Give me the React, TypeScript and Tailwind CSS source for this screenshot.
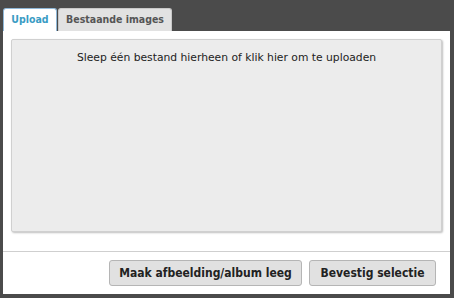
import { useState } from 'react';

const font = { fontFamily: '"DejaVu Sans", Verdana, sans-serif' };
const bold = { fontFamily: '"DejaVu Sans Condensed", "DejaVu Sans", Verdana, sans-serif' };

export default function App() {
  const [tab, setTab] = useState<'upload' | 'existing'>('upload');

  const tabClass = (active: boolean) =>
    active
      ? 'rounded-t-[3px] border border-b-0 border-[#8fb8d8] bg-white text-[10.5px] font-bold text-[#3a9cc4]'
      : 'rounded-t-[3px] border border-b-0 border-[#c8c8c8] bg-[#e2e2e2] text-[10.5px] font-bold text-[#555]';

  return (
    <div className="w-[454px] h-[298px] bg-[#4b4b4b] pl-[3px] pr-[4px] pb-[4px] pt-[8px] flex flex-col" style={font}>
      {/* Tabs */}
      <div className="flex gap-[1px] h-[23px]">
        <button onClick={() => setTab('upload')} className={`w-[54px] ${tabClass(tab === 'upload')}`} style={bold}>
          Upload
        </button>
        <button onClick={() => setTab('existing')} className={`w-[114px] ${tabClass(tab === 'existing')}`} style={bold}>
          Bestaande images
        </button>
      </div>

      {/* Panel */}
      <div className="flex-1 bg-white flex flex-col">
        <div className="px-[8px] pt-[8px] pb-[19px]">
          <div className="h-[193px] bg-[#ececec] border border-[#d0d0d0] rounded-[2px] shadow-[1px_1px_2px_rgba(0,0,0,0.25)] flex justify-center pt-[10px] cursor-pointer">
            <span className="text-[10.75px] text-[#222]">Sleep één bestand hierheen of klik hier om te uploaden</span>
          </div>
        </div>
        <div className="border-t border-[#cfcfcf] flex justify-end gap-[7px] pt-[8px] pr-[14px]">
          <button className="w-[193px] h-[26px] rounded-[3px] border border-[#b5b5b5] bg-[#e1e1e1] text-[12px] font-bold text-[#222]" style={bold}>
            Maak afbeelding/album leeg
          </button>
          <button className="w-[127px] h-[26px] rounded-[3px] border border-[#b5b5b5] bg-[#e1e1e1] text-[12px] font-bold text-[#222]" style={bold}>
            Bevestig selectie
          </button>
        </div>
      </div>
    </div>
  );
}
